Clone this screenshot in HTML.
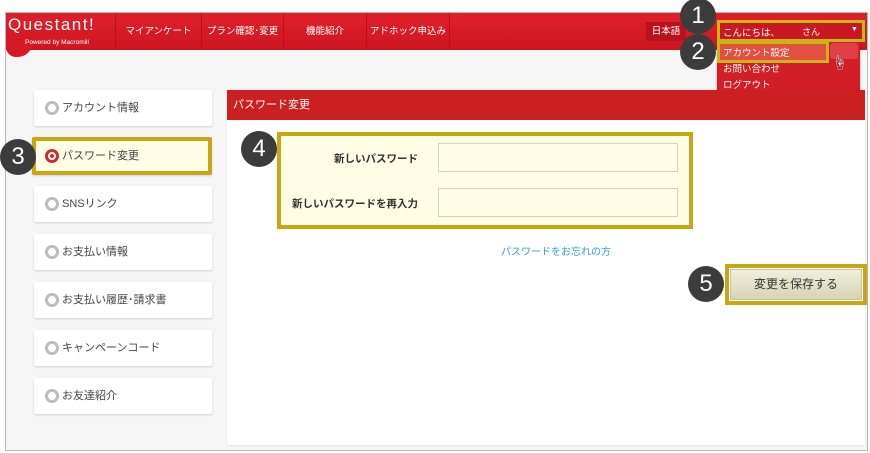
<!DOCTYPE html>
<html><head><meta charset="utf-8"><style>
*{margin:0;padding:0;box-sizing:border-box}
body{width:870px;height:453px;background:#fff;position:relative;overflow:hidden;font-family:"Liberation Sans","Noto Sans CJK JP",sans-serif;font-size:11px;color:#333}
.a{position:absolute}
.frame{left:5px;top:12px;width:863px;height:439px;border:1px solid #b8b8b8;background:#f6f6f6}
.hdr{left:6px;top:13px;width:861px;height:37px;background:linear-gradient(#e0202b,#cc1622)}
.nav{top:13px;height:37px;line-height:37px;color:#fff;font-size:9.5px;text-align:center;border-left:1px solid #b80f1a}
.circ{width:36px;height:36px;border-radius:50%;background:#3c3c3c;color:#fff;font-size:24px;line-height:36px;text-align:center}
.side{left:34px;width:178px;height:36px;background:#fff;border-radius:2px;box-shadow:0 1px 2px rgba(0,0,0,.15);font-size:11px;line-height:36px;padding-left:28px;color:#444}
.rad{position:absolute;left:11px;top:11px;width:14px;height:14px;border-radius:50%;border:3px solid #b9bdc3;background:#fff}
.yb{border:4px solid #c9a614}
.inp{left:438px;width:240px;height:29px;border:1px solid #d4d2bf;background:#fffde6}
.lbl{width:140px;text-align:right;font-size:10.5px;font-weight:bold;color:#333}
</style></head><body>
<div class="a frame"></div>
<div class="a hdr"></div>
<div class="a" style="left:6px;top:40px;width:26px;height:17px;background:#d61a25;border-radius:0 0 14px 10px"></div>
<div class="a" style="left:8px;top:15px;color:#fff;font-size:17px;letter-spacing:1.5px">Questant!</div>
<div class="a" style="left:25px;top:39px;color:#fff;font-size:6.5px">Powered by Macromill</div>
<div class="a nav" style="left:115px;width:86px">マイアンケート</div>
<div class="a nav" style="left:201px;width:82px">プラン確認･変更</div>
<div class="a nav" style="left:283px;width:83px">機能紹介</div>
<div class="a nav" style="left:366px;width:83px">アドホック申込み</div>
<div class="a nav" style="left:449px;width:1px"></div>
<div class="a" style="left:646px;top:22px;width:40px;height:19px;background:#b8121c;color:#fff;font-size:9.5px;line-height:19px;text-align:center">日本語</div>
<div class="a" style="left:717px;top:20px;width:148px;height:22px;background:#c81822;border:3px solid #c9b514"></div>
<div class="a" style="left:723px;top:25px;color:#fff;font-size:9.5px">こんにちは、</div>
<div class="a" style="left:802px;top:25px;color:#fff;font-size:9px">さん</div>
<div class="a" style="left:851px;top:26px;color:#fff;font-size:7px">▼</div>
<div class="a" style="left:717px;top:42px;width:143px;height:52px;background:#d21e27;border-radius:0 0 3px 3px;box-shadow:0 1px 2px rgba(0,0,0,.3)"></div>
<div class="a" style="left:830px;top:43px;width:28px;height:16px;background:#e04048;border-radius:3px"></div>
<div class="a" style="left:717px;top:41px;width:112px;height:22px;background:#e25040;border:3px solid #c9b514"></div>
<div class="a" style="left:723px;top:45px;color:#fff;font-size:9.5px">アカウント設定</div>
<div class="a" style="left:723px;top:61px;color:#fff;font-size:9.5px">お問い合わせ</div>
<div class="a" style="left:723px;top:77px;color:#fff;font-size:9.5px">ログアウト</div>
<div class="a" style="left:832px;top:52px;color:#fff;font-size:15px;text-shadow:0 0 1px #000">☝</div>
<div class="a circ" style="left:680px;top:-2px">1</div>
<div class="a circ" style="left:680px;top:34px">2</div>

<div class="a side" style="top:90px"><span class="rad"></span>アカウント情報</div>
<div class="a side yb" style="left:32px;top:137px;width:180px;height:38px;background:#fffde6;padding-left:26px;line-height:30px"><span class="rad" style="left:9px;top:8px;border-color:#d52a2a"><span style="position:absolute;left:2px;top:2px;width:4px;height:4px;border-radius:50%;background:#d52a2a"></span></span>パスワード変更</div>
<div class="a side" style="top:186px"><span class="rad"></span>SNSリンク</div>
<div class="a side" style="top:234px"><span class="rad"></span>お支払い情報</div>
<div class="a side" style="top:282px"><span class="rad"></span>お支払い履歴･請求書</div>
<div class="a side" style="top:330px"><span class="rad"></span>キャンペーンコード</div>
<div class="a side" style="top:378px"><span class="rad"></span>お友達紹介</div>
<div class="a circ" style="left:0px;top:139px">3</div>

<div class="a" style="left:227px;top:90px;width:638px;height:355px;background:#fff;box-shadow:0 1px 2px rgba(0,0,0,.1)"></div>
<div class="a" style="left:227px;top:90px;width:638px;height:30px;background:#cc1f21;color:#fff;font-size:11px;line-height:30px;padding-left:6px">パスワード変更</div>
<div class="a yb" style="left:277px;top:132px;width:416px;height:97px;background:#fffde6"></div>
<div class="a lbl" style="left:278px;top:151px">新しいパスワード</div>
<div class="a lbl" style="left:278px;top:196px">新しいパスワードを再入力</div>
<div class="a inp" style="top:143px"></div>
<div class="a inp" style="top:188px"></div>
<div class="a circ" style="left:241px;top:131px">4</div>
<div class="a" style="left:480px;top:243px;width:152px;text-align:center;color:#3a9ad9;font-size:10px">パスワードをお忘れの方</div>
<div class="a yb" style="left:725px;top:264px;width:142px;height:41px;background:#fff"></div>
<div class="a" style="left:730px;top:269px;width:132px;height:31px;background:linear-gradient(#f0efdc,#d6d3b6);border:1px solid #c8c4a4;text-align:center;line-height:29px;font-size:12px;color:#333">変更を保存する</div>
<div class="a circ" style="left:688px;top:266px">5</div>
</body></html>
